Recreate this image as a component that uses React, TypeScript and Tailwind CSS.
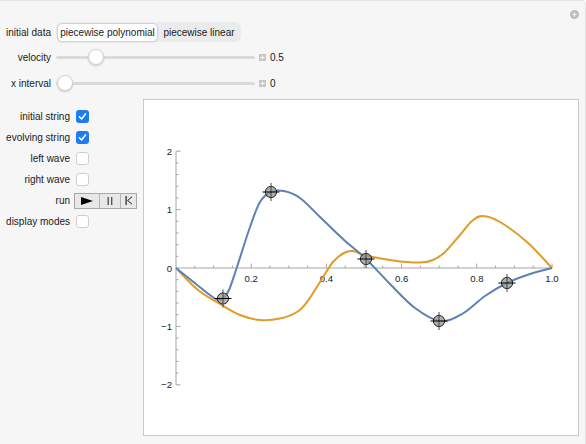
import React from 'react';

type Pt = [number, number];

// catmull-rom through the points, as cubic bezier
function smooth(pts: Pt[]): string {
  let d = `M${pts[0][0]},${pts[0][1]}`;
  for (let i = 0; i < pts.length - 1; i++) {
    const p0 = pts[i - 1] || pts[i];
    const p1 = pts[i];
    const p2 = pts[i + 1];
    const p3 = pts[i + 2] || p2;
    const c1x = p1[0] + (p2[0] - p0[0]) / 6;
    const c1y = p1[1] + (p2[1] - p0[1]) / 6;
    const c2x = p2[0] - (p3[0] - p1[0]) / 6;
    const c2y = p2[1] - (p3[1] - p1[1]) / 6;
    d += ` C${c1x.toFixed(1)},${c1y.toFixed(1)} ${c2x.toFixed(1)},${c2y.toFixed(1)} ${p2[0]},${p2[1]}`;
  }
  return d;
}

const blue: Pt[] = [
  [176, 269], [196, 285], [210, 296], [217, 300.5], [223, 299.5], [229, 291],
  [237, 268], [250, 228], [260, 203], [271, 193], [284, 192], [300, 199],
  [320, 218], [343, 240], [366, 260], [390, 285], [415, 309], [440, 322],
  [462, 315], [485, 297], [507, 284], [530, 275], [552, 269],
];

const orange: Pt[] = [
  [176, 269], [198, 291], [220, 305], [240, 316], [260, 321], [280, 319.5],
  [297, 313], [307, 303], [320, 283], [333, 263], [344, 254], [353, 252],
  [366, 256.5], [393, 261.5], [420, 263.5], [433, 261], [445, 253], [460, 236],
  [472, 222], [483, 217], [500, 223], [527, 243], [552, 269],
];

const markers: Pt[] = [[223, 299.5], [271, 193], [366, 260], [439, 322], [507, 284]];

const X0 = 176;
const Y0 = 269;
const XS = 376;
const YS = 58.4;

function Plot() {
  const xTicks = Array.from({ length: 20 }, (_, i) => i + 1);
  const yTicks = Array.from({ length: 21 }, (_, i) => i - 10).filter((k) => k !== 0);
  return (
    <svg className="block w-full h-full" viewBox="144 101 434 335">
      {/* axes */}
      <line x1={X0} y1={Y0} x2={X0 + XS} y2={Y0} stroke="#a6a6a6" strokeWidth="1" />
      <line x1={X0} y1={Y0 - 2 * YS} x2={X0} y2={Y0 + 2 * YS} stroke="#a6a6a6" strokeWidth="1" />
      {xTicks.map((i) => {
        const x = X0 + i * (XS / 20);
        const len = i % 4 === 0 ? 4.5 : 2.5;
        return <line key={'x' + i} x1={x} y1={Y0} x2={x} y2={Y0 - len} stroke="#a6a6a6" strokeWidth="1" />;
      })}
      {yTicks.map((k) => {
        const y = Y0 - k * 0.2 * YS;
        const len = k % 5 === 0 ? 4.5 : 2.5;
        return <line key={'y' + k} x1={X0} y1={y} x2={X0 + len} y2={y} stroke="#a6a6a6" strokeWidth="1" />;
      })}
      <g fontFamily="'Liberation Sans', Arial, sans-serif" fontSize="9.6" fill="#222">
        {['0.2', '0.4', '0.6', '0.8', '1.0'].map((t, i) => (
          <text key={t} x={X0 + (i + 1) * 0.2 * XS} y={283} textAnchor="middle">{t}</text>
        ))}
        {[2, 1, 0, -1, -2].map((v) => (
          <text key={v} x={172} y={Y0 - v * YS + 3.6} textAnchor="end">
            {v < 0 ? '\u2212' + Math.abs(v) : String(v)}
          </text>
        ))}
      </g>
      <path d={smooth(orange)} fill="none" stroke="#e19c24" strokeWidth="2" strokeLinejoin="round" />
      <path d={smooth(blue)} fill="none" stroke="#5e81b5" strokeWidth="2" strokeLinejoin="round" />
      {markers.map(([cx, cy], i) => (
        <g key={i}>
          <circle cx={cx} cy={cy} r="5.6" fill="#9a9a9a" fillOpacity="0.8" stroke="#111" strokeWidth="0.9" />
          <line x1={cx} y1={cy - 9} x2={cx} y2={cy + 9} stroke="#444" strokeWidth="1" />
          <line x1={cx - 8.5} y1={cy} x2={cx + 8.5} y2={cy} stroke="#000" strokeWidth="1" />
        </g>
      ))}
    </svg>
  );
}

function Slider({ thumb, value }: { thumb: number; value: string }) {
  // thumb is the centre, measured from the track's left edge
  return (
    <div className="flex items-center h-[20px]">
      <div className="relative w-[199px] h-[20px] flex items-center">
        <div className="w-full h-[3px] rounded-full bg-[#dadada]" />
        <div
          className="absolute top-[2px] w-[16px] h-[16px] rounded-full bg-white border border-[#d4d4d4] shadow-[0_1px_2px_rgba(0,0,0,0.18)]"
          style={{ left: thumb - 8 }}
        />
      </div>
      <div className="ml-[4px] w-[7px] h-[7px] bg-[#c6c6c6] flex items-center justify-center">
        <svg width="5" height="5" viewBox="0 0 5 5">
          <path d="M2.5 0.5V4.5M0.5 2.5H4.5" stroke="#fff" strokeWidth="1" />
        </svg>
      </div>
      <span className="ml-[4px]">{value}</span>
    </div>
  );
}

function CheckBox({ checked }: { checked: boolean }) {
  if (checked) {
    return (
      <div className="w-[13px] h-[13px] rounded-[3px] bg-[#1b7cf4] flex items-center justify-center">
        <svg width="9" height="9" viewBox="0 0 9 9">
          <path d="M1.4 4.8L3.6 7L7.6 1.8" fill="none" stroke="#fff" strokeWidth="1.6" strokeLinecap="round" strokeLinejoin="round" />
        </svg>
      </div>
    );
  }
  return <div className="w-[13px] h-[13px] rounded-[3px] bg-white border border-[#cfcfcf]" />;
}

function RunButtons() {
  return (
    <div className="flex h-[16px] border border-[#a9a9a9] bg-[#e8e8e8] -ml-[2px]">
      <div className="w-[25px] flex items-center justify-center border-r border-[#b4b4b4]">
        <svg width="12" height="8" viewBox="0 0 12 8">
          <path d="M0 0L12 4L0 8Z" fill="#000" />
        </svg>
      </div>
      <div className="w-[21px] flex items-center justify-center border-r border-[#b4b4b4]">
        <svg width="6" height="8" viewBox="0 0 6 8">
          <rect x="0.5" y="0" width="1.4" height="8" fill="#555" />
          <rect x="4" y="0" width="1.4" height="8" fill="#555" />
        </svg>
      </div>
      <div className="w-[15px] flex items-center justify-center">
        <svg width="8" height="9" viewBox="0 0 8 9">
          <rect x="0.5" y="0" width="1.2" height="9" fill="#222" />
          <path d="M7 0.8L2.6 4.5L7 8.2" fill="none" stroke="#222" strokeWidth="1" />
        </svg>
      </div>
    </div>
  );
}

const rows: { label: string; kind: 'on' | 'off' | 'run' }[] = [
  { label: 'initial string', kind: 'on' },
  { label: 'evolving string', kind: 'on' },
  { label: 'left wave', kind: 'off' },
  { label: 'right wave', kind: 'off' },
  { label: 'run', kind: 'run' },
  { label: 'display modes', kind: 'off' },
];

export default function App() {
  return (
    <div className="relative w-[586px] h-[444px] overflow-hidden bg-[#f6f6f6] border-t border-r border-[#e4e4e4] rounded-tr-[5px] text-[10px] text-[#1a1a1a] font-['Liberation_Sans',Arial,sans-serif]">
      <div className="absolute top-[9px] right-[6px] w-[9px] h-[9px] rounded-full bg-[#bdbdbd] flex items-center justify-center">
        <svg width="5" height="5" viewBox="0 0 5 5">
          <path d="M2.5 0.5V4.5M0.5 2.5H4.5" stroke="#fff" strokeWidth="1.1" />
        </svg>
      </div>

      <div className="pt-[21px]">
        <div className="flex items-center h-[20px]">
          <span className="w-[51px] text-right">initial data</span>
          <div className="ml-[5px] flex items-center h-[20px] w-[185px] rounded-[6px] bg-[#ebebeb] p-[1px]">
            <div className="h-[19px] w-[101px] flex items-center justify-center rounded-[5px] bg-white border border-[#d2d2d2] shadow-[0_1px_1px_rgba(0,0,0,0.06)]">
              piecewise polynomial
            </div>
            <div className="flex-1 flex items-center justify-center">piecewise linear</div>
          </div>
        </div>
        <div className="flex items-center h-[20px] mt-[5px]">
          <span className="w-[51px] text-right">velocity</span>
          <div className="ml-[5px]">
            <Slider thumb={39.5} value="0.5" />
          </div>
        </div>
        <div className="flex items-center h-[20px] mt-[6px]">
          <span className="w-[51px] text-right">x interval</span>
          <div className="ml-[5px]">
            <Slider thumb={9} value="0" />
          </div>
        </div>
      </div>

      <div className="flex mt-[6px]">
        <div className="w-[143px] pt-[7px]">
          {rows.map((r) => (
            <div key={r.label} className="flex items-center h-[21px]">
              <span className="w-[70px] text-right">{r.label}</span>
              <div className="ml-[6px]">
                {r.kind === 'run' ? <RunButtons /> : <CheckBox checked={r.kind === 'on'} />}
              </div>
            </div>
          ))}
        </div>
        <div className="w-[436px] h-[337px] bg-white border border-[#c9c9c9]">
          <Plot />
        </div>
      </div>
    </div>
  );
}
